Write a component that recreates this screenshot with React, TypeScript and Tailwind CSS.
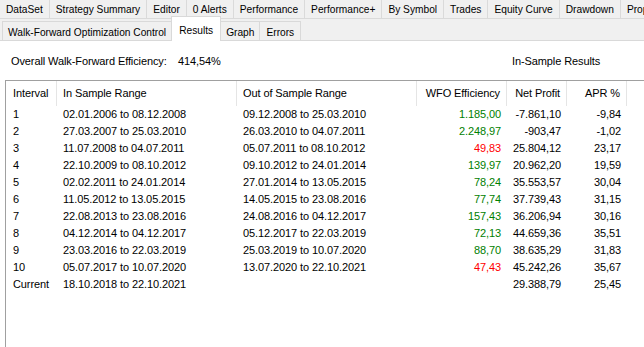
import React from "react";

const topTabs = [
  "DataSet",
  "Strategy Summary",
  "Editor",
  "0 Alerts",
  "Performance",
  "Performance+",
  "By Symbol",
  "Trades",
  "Equity Curve",
  "Drawdown",
  "Properties",
];

type Row = {
  i: string;
  ins: string;
  oos: string;
  wfo: string;
  good: boolean;
  np: string;
  apr: string;
};

const rows: Row[] = [
  { i: "1", ins: "02.01.2006 to 08.12.2008", oos: "09.12.2008 to 25.03.2010", wfo: "1.185,00", good: true, np: "-7.861,10", apr: "-9,84" },
  { i: "2", ins: "27.03.2007 to 25.03.2010", oos: "26.03.2010 to 04.07.2011", wfo: "2.248,97", good: true, np: "-903,47", apr: "-1,02" },
  { i: "3", ins: "11.07.2008 to 04.07.2011", oos: "05.07.2011 to 08.10.2012", wfo: "49,83", good: false, np: "25.804,12", apr: "23,17" },
  { i: "4", ins: "22.10.2009 to 08.10.2012", oos: "09.10.2012 to 24.01.2014", wfo: "139,97", good: true, np: "20.962,20", apr: "19,59" },
  { i: "5", ins: "02.02.2011 to 24.01.2014", oos: "27.01.2014 to 13.05.2015", wfo: "78,24", good: true, np: "35.553,57", apr: "30,04" },
  { i: "6", ins: "11.05.2012 to 13.05.2015", oos: "14.05.2015 to 23.08.2016", wfo: "77,74", good: true, np: "37.739,43", apr: "31,15" },
  { i: "7", ins: "22.08.2013 to 23.08.2016", oos: "24.08.2016 to 04.12.2017", wfo: "157,43", good: true, np: "36.206,94", apr: "30,16" },
  { i: "8", ins: "04.12.2014 to 04.12.2017", oos: "05.12.2017 to 22.03.2019", wfo: "72,13", good: true, np: "44.659,36", apr: "35,51" },
  { i: "9", ins: "23.03.2016 to 22.03.2019", oos: "25.03.2019 to 10.07.2020", wfo: "88,70", good: true, np: "38.635,29", apr: "31,83" },
  { i: "10", ins: "05.07.2017 to 10.07.2020", oos: "13.07.2020 to 22.10.2021", wfo: "47,43", good: false, np: "45.242,26", apr: "35,67" },
  { i: "Current", ins: "18.10.2018 to 22.10.2021", oos: "", wfo: "", good: true, np: "29.388,79", apr: "25,45" },
];

const cols = "grid grid-cols-[51px_180px_180px_90px_60px_60px]";

export default function App() {
  return (
    <div
      className="w-[644px] h-[347px] overflow-hidden bg-white text-black flex flex-col"
      style={{ fontFamily: '"Liberation Sans", Arial, sans-serif' }}
    >
      {/* top tab strip */}
      <div className="flex h-[19px] shrink-0 bg-[#f0f0f0] border-b border-[#dadada] text-[10.2px] leading-[19px] whitespace-nowrap overflow-hidden">
        {topTabs.map((t) => (
          <div key={t} className="px-[6px] border-r border-[#dadada] shrink-0">
            {t}
          </div>
        ))}
      </div>

      {/* second tab strip */}
      <div className="flex items-end h-[22px] shrink-0 bg-[#f0f0f0] border-b border-[#d9d9d9] pl-[2px] text-[10.2px] whitespace-nowrap">
        <div className="h-[19px] pt-[2px] leading-[17px] px-[5px] border-t border-l border-[#d9d9d9]">
          Walk-Forward Optimization Control
        </div>
        <div className="relative z-10 h-[25px] -mb-[1px] pt-[1px] leading-[25px] px-[7px] bg-white border-t border-l border-r border-[#d9d9d9]">
          Results
        </div>
        <div className="h-[19px] pt-[2px] leading-[17px] px-[5px] border-t border-r border-[#d9d9d9]">
          Graph
        </div>
        <div className="h-[19px] pt-[2px] leading-[17px] px-[6px] border-t border-r border-[#d9d9d9]">
          Errors
        </div>
      </div>

      {/* content */}
      <div className="flex-1 flex flex-col bg-white text-[11px] tracking-[-0.1px]">
        <div className="flex h-[13px] leading-[13px] mt-[14px] whitespace-nowrap">
          <div className="pl-[11px] w-[178px]">Overall Walk-Forward Efficiency:</div>
          <div className="w-[334px]">414,54%</div>
          <div>In-Sample Results</div>
        </div>

        <div className="flex-1 mt-[12px] ml-[5px] border-l border-t border-[#a0a0a0] whitespace-nowrap">
          <div className={`${cols} h-[25px] leading-[25px]`}>
            <div className="pl-[7px] border-r border-[#e5e5e5]">Interval</div>
            <div className="pl-[6px] border-r border-[#e5e5e5]">In Sample Range</div>
            <div className="pl-[6px] border-r border-[#e5e5e5]">Out of Sample Range</div>
            <div className="pr-[6px] text-right border-r border-[#e5e5e5]">WFO Efficiency</div>
            <div className="pr-[6px] text-right border-r border-[#e5e5e5]">Net Profit</div>
            <div className="pr-[6px] text-right border-r border-[#e5e5e5]">APR %</div>
          </div>
          {rows.map((r) => (
            <div key={r.i} className={`${cols} h-[17px] leading-[17px]`}>
              <div className="pl-[7px]">{r.i}</div>
              <div className="pl-[6px]">{r.ins}</div>
              <div className="pl-[6px]">{r.oos}</div>
              <div className={`pr-[6px] text-right ${r.good ? "text-[#008000]" : "text-[#ff0000]"}`}>{r.wfo}</div>
              <div className="pr-[6px] text-right">{r.np}</div>
              <div className="pr-[6px] text-right">{r.apr}</div>
            </div>
          ))}
        </div>
      </div>
    </div>
  );
}
